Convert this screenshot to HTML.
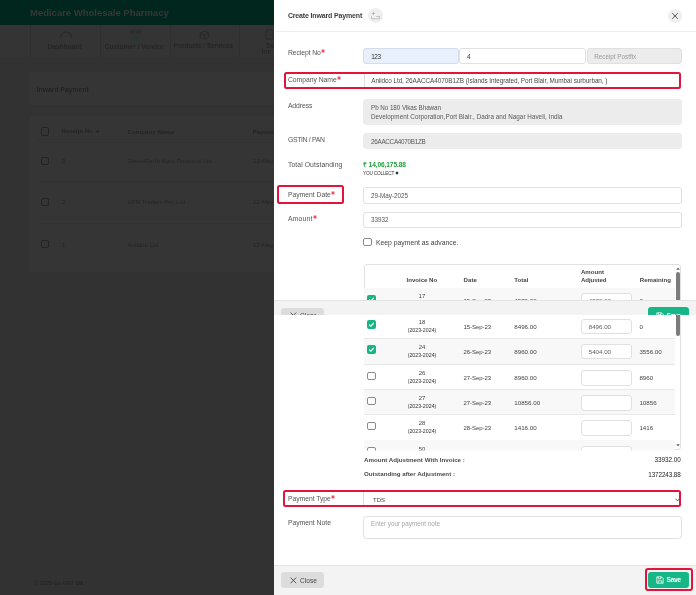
<!DOCTYPE html>
<html><head><meta charset="utf-8"><style>
html,body{margin:0;padding:0;}
body{width:696px;height:595px;overflow:hidden;position:relative;background:#323232;font-family:"Liberation Sans",sans-serif;}
#w{position:absolute;left:0;top:0;width:696px;height:595px;overflow:hidden;will-change:transform;background:#323232;}
.r{position:absolute;}
svg.r{overflow:visible;}
.t{position:absolute;white-space:nowrap;font-family:"Liberation Sans",sans-serif;}
</style></head><body><div id="w">
<div class="r" style="left:0px;top:0px;width:274.00px;height:25.00px;background:#00261d;"></div>
<div class="t" style="left:30.00px;top:8px;font-size:9.5px;line-height:9.5px;color:#3a3636;font-weight:700;letter-spacing:-0.006px;">Medicare Wholesale Pharmacy</div>
<div class="r" style="left:0px;top:25px;width:274.00px;height:32.00px;background:#343434;"></div>
<div class="r" style="left:30px;top:25px;width:0.80px;height:32.00px;background:#2f2f2f;"></div>
<div class="r" style="left:99.5px;top:25px;width:0.80px;height:32.00px;background:#2f2f2f;"></div>
<div class="r" style="left:169.5px;top:25px;width:0.80px;height:32.00px;background:#2f2f2f;"></div>
<div class="r" style="left:238.5px;top:25px;width:0.80px;height:32.00px;background:#2f2f2f;"></div>
<div class="t" style="left:47.70px;top:44px;font-size:6.5px;line-height:6.5px;color:#262626;font-weight:700;letter-spacing:0.031px;">Dashboard</div>
<div class="t" style="left:104.80px;top:44px;font-size:6.5px;line-height:6.5px;color:#262626;font-weight:700;letter-spacing:0.076px;">Customer / Vendor</div>
<div class="t" style="left:173.60px;top:43px;font-size:6.5px;line-height:6.5px;color:#262626;font-weight:700;letter-spacing:-0.046px;">Products / Services</div>
<div class="t" style="left:266.00px;top:43px;font-size:6.5px;line-height:6.5px;color:#262626;font-weight:700;">Sa</div>
<div class="t" style="left:261.70px;top:49px;font-size:6.5px;line-height:6.5px;color:#262626;font-weight:700;">Inv</div>
<svg class="r" style="left:59px;top:30px" width="14" height="9" viewBox="0 0 14 9"><path d="M1.5 7.5A5.3 5.3 0 0 1 12.5 7.5" fill="none" stroke="#262626" stroke-width="1.1"/><path d="M7 7L9 4.5" stroke="#1d3a30" stroke-width="0.9"/></svg>
<svg class="r" style="left:129px;top:29px" width="13" height="12" viewBox="0 0 13 12"><circle cx="3.5" cy="3" r="1.8" fill="none" stroke="#262626" stroke-width="0.9"/><circle cx="9.5" cy="3" r="1.8" fill="none" stroke="#262626" stroke-width="0.9"/><circle cx="6.5" cy="8.5" r="1.8" fill="none" stroke="#1d3a30" stroke-width="0.9"/></svg>
<svg class="r" style="left:199px;top:30px" width="11" height="10" viewBox="0 0 11 10"><path d="M5.5 1L9.8 3.2V7.2L5.5 9.3L1.2 7.2V3.2Z M1.2 3.2L5.5 5.3L9.8 3.2 M5.5 5.3V9.3" fill="none" stroke="#262626" stroke-width="0.9"/></svg>
<svg class="r" style="left:265px;top:29px" width="9" height="11" viewBox="0 0 9 11"><rect x="1" y="1" width="7" height="9" rx="1" fill="none" stroke="#262626" stroke-width="0.9"/></svg>
<div class="r" style="left:29px;top:72px;width:245.00px;height:33.00px;background:#353535;border-radius:3px;"></div>
<div class="t" style="left:36.70px;top:87px;font-size:6.8px;line-height:6.8px;color:#242424;font-weight:700;letter-spacing:-0.011px;">Inward Payment</div>
<div class="r" style="left:29px;top:116px;width:245.00px;height:156.00px;background:#353535;border-radius:3px;"></div>
<div class="r" style="left:40.9px;top:127.4px;width:8.40px;height:8.30px;border:0.9px solid #242424;border-radius:2px;box-sizing:border-box;"></div>
<div class="t" style="left:61.60px;top:128px;font-size:6.0px;line-height:6.0px;color:#242424;font-weight:700;letter-spacing:-0.038px;">Receipt No</div>
<svg class="r" style="left:94.5px;top:129.5px" width="5" height="4" viewBox="0 0 5 4"><path d="M0.5 0.8H4.5L2.5 3.2Z" fill="#242424"/></svg>
<div class="t" style="left:127.60px;top:129px;font-size:6.0px;line-height:6.0px;color:#242424;font-weight:700;letter-spacing:0.123px;">Company Name</div>
<div class="t" style="left:252.70px;top:129px;font-size:6.0px;line-height:6.0px;color:#242424;font-weight:700;">Payment</div>
<div class="r" style="left:37px;top:139px;width:237.00px;height:1.00px;background:#313131;"></div>
<div class="r" style="left:41.2px;top:156.70000000000002px;width:8.30px;height:8.20px;border:0.9px solid #242424;border-radius:2px;box-sizing:border-box;"></div>
<div class="t" style="left:62.00px;top:158px;font-size:6.0px;line-height:6.0px;color:#262626;font-weight:400;">3</div>
<div class="t" style="left:127.40px;top:158px;font-size:6.2px;line-height:6.2px;color:#262626;font-weight:400;letter-spacing:0.053px;">GreenEarth Agro Products Ltd</div>
<div class="t" style="left:253.00px;top:158px;font-size:6.2px;line-height:6.2px;color:#262626;font-weight:400;">12-May</div>
<div class="r" style="left:37px;top:181.2px;width:237.00px;height:1.00px;background:#323232;"></div>
<div class="r" style="left:41.2px;top:198.3px;width:8.30px;height:8.20px;border:0.9px solid #242424;border-radius:2px;box-sizing:border-box;"></div>
<div class="t" style="left:62.00px;top:199px;font-size:6.0px;line-height:6.0px;color:#262626;font-weight:400;">2</div>
<div class="t" style="left:127.40px;top:199px;font-size:6.2px;line-height:6.2px;color:#262626;font-weight:400;letter-spacing:-0.033px;">APN Traders Pvt. Ltd.</div>
<div class="t" style="left:253.00px;top:199px;font-size:6.2px;line-height:6.2px;color:#262626;font-weight:400;">12-May</div>
<div class="r" style="left:37px;top:223.3px;width:237.00px;height:1.00px;background:#323232;"></div>
<div class="r" style="left:41.2px;top:239.70000000000002px;width:8.30px;height:8.20px;border:0.9px solid #242424;border-radius:2px;box-sizing:border-box;"></div>
<div class="t" style="left:62.00px;top:242px;font-size:6.0px;line-height:6.0px;color:#262626;font-weight:400;">1</div>
<div class="t" style="left:127.40px;top:242px;font-size:6.2px;line-height:6.2px;color:#262626;font-weight:400;letter-spacing:0.032px;">Aniidco Ltd</div>
<div class="t" style="left:253.00px;top:242px;font-size:6.2px;line-height:6.2px;color:#262626;font-weight:400;">12-May</div>
<div class="t" style="left:34.00px;top:581px;font-size:5.9px;line-height:5.9px;color:#222;font-weight:400;letter-spacing:-0.164px;">© 2025 Go GST Bill</div>
<div class="r" style="left:274px;top:0px;width:422.00px;height:595.00px;background:#fff;"></div>
<div class="t" style="left:287.90px;top:12px;font-size:7.0px;line-height:7.0px;color:#3d3d3d;font-weight:700;letter-spacing:-0.151px;">Create Inward Payment</div>
<div class="r" style="left:368px;top:8px;width:14.70px;height:14.70px;background:#efefef;border-radius:50%;"></div>
<svg class="r" style="left:370px;top:10px" width="11" height="11" viewBox="0 0 11 11"><path d="M3.4 1.8v3.4M1.7 3.5h3.4" fill="none" stroke="#aaa" stroke-width="0.7"/><path d="M1.6 6.2v2.6h8v-2.3h-3.2" fill="none" stroke="#aaa" stroke-width="0.7"/></svg>
<div class="r" style="left:668px;top:8.6px;width:14.00px;height:14.00px;background:#efefef;border-radius:50%;"></div>
<svg class="r" style="left:671px;top:11.6px" width="8" height="8" viewBox="0 0 8 8"><path d="M1.2 1.2L6.8 6.8M6.8 1.2L1.2 6.8" stroke="#4a4a4a" stroke-width="0.9"/></svg>
<div class="r" style="left:275px;top:31px;width:421.00px;height:1.00px;background:#efefef;"></div>
<div class="t" style="left:287.90px;top:50px;font-size:6.8px;line-height:6.8px;color:#555;font-weight:400;letter-spacing:-0.071px;">Reciept No</div>
<svg class="r" style="left:321.2px;top:49.0px" width="4" height="4" viewBox="0 0 4 4"><path d="M2 0.2V3.8M0.4 1.1L3.6 2.9M3.6 1.1L0.4 2.9" stroke="#ea3b4a" stroke-width="0.95"/></svg>
<div class="r" style="left:363px;top:48.3px;width:95.50px;height:15.40px;background:#e8f0fe;border:0.8px solid #d6dde8;border-radius:3px;box-sizing:border-box;"></div>
<div class="t" style="left:371.20px;top:54px;font-size:6.4px;line-height:6.4px;color:#333;font-weight:400;letter-spacing:-0.439px;">123</div>
<div class="r" style="left:459px;top:48.3px;width:127.00px;height:15.40px;background:#fff;border:0.8px solid #e0e0e0;border-radius:3px;box-sizing:border-box;"></div>
<div class="t" style="left:466.90px;top:54px;font-size:6.4px;line-height:6.4px;color:#333;font-weight:400;">4</div>
<div class="r" style="left:586.7px;top:48.3px;width:95.00px;height:15.40px;background:#ececec;border:0.8px solid #e0e0e0;border-radius:3px;box-sizing:border-box;"></div>
<div class="t" style="left:594.20px;top:54px;font-size:6.3px;line-height:6.3px;color:#9a9a9a;font-weight:400;">Receipt Postfix</div>
<div class="r" style="left:363.6px;top:73px;width:317.40px;height:14.00px;background:#fff;border-left:0.8px solid #dcdcdc;"></div>
<div class="t" style="left:371.20px;top:78px;font-size:6.4px;line-height:6.4px;color:#4a4a4a;font-weight:400;letter-spacing:-0.062px;">Aniidco Ltd, 26AACCA4070B1ZB (Islands Integrated, Port Blair, Mumbai surburban, )</div>
<div class="t" style="left:287.90px;top:77px;font-size:6.8px;line-height:6.8px;color:#555;font-weight:400;letter-spacing:-0.030px;">Company Name</div>
<svg class="r" style="left:337.0px;top:76.0px" width="4" height="4" viewBox="0 0 4 4"><path d="M2 0.2V3.8M0.4 1.1L3.6 2.9M3.6 1.1L0.4 2.9" stroke="#ea3b4a" stroke-width="0.95"/></svg>
<div class="t" style="left:287.90px;top:103px;font-size:6.8px;line-height:6.8px;color:#555;font-weight:400;letter-spacing:-0.074px;">Address</div>
<div class="r" style="left:363px;top:99.2px;width:318.70px;height:25.40px;background:#ececec;border-radius:3.5px;"></div>
<div class="t" style="left:371.00px;top:105px;font-size:6.3px;line-height:6.3px;color:#595959;font-weight:400;letter-spacing:-0.059px;">Pb No 180 Vikas Bhawan</div>
<div class="t" style="left:371.00px;top:114px;font-size:6.3px;line-height:6.3px;color:#595959;font-weight:400;letter-spacing:0.037px;">Development Corporation,Port Blair., Dadra and Nagar Haveli, India</div>
<div class="t" style="left:287.90px;top:137px;font-size:6.8px;line-height:6.8px;color:#555;font-weight:400;letter-spacing:-0.292px;">GSTIN / PAN</div>
<div class="r" style="left:363px;top:133px;width:318.70px;height:15.60px;background:#ececec;border-radius:3.5px;"></div>
<div class="t" style="left:371.00px;top:139px;font-size:6.3px;line-height:6.3px;color:#595959;font-weight:400;letter-spacing:-0.270px;">26AACCA4070B1ZB</div>
<div class="t" style="left:287.90px;top:162px;font-size:6.8px;line-height:6.8px;color:#555;font-weight:400;letter-spacing:0.099px;">Total Outstanding</div>
<div class="t" style="left:363.00px;top:162px;font-size:6.6px;line-height:6.6px;color:#21a03a;font-weight:700;letter-spacing:-0.109px;">₹ 14,06,175.88</div>
<div class="t" style="left:363.00px;top:172px;font-size:4.7px;line-height:4.7px;color:#333;font-weight:400;letter-spacing:-0.167px;">YOU COLLECT</div>
<svg class="r" style="left:395.2px;top:171.3px" width="4" height="4" viewBox="0 0 4 4"><path d="M2 0.3L3.7 2L2 3.7L0.3 2Z" fill="#333"/></svg>
<div class="t" style="left:287.90px;top:192px;font-size:6.8px;line-height:6.8px;color:#555;font-weight:400;letter-spacing:-0.008px;">Payment Date</div>
<svg class="r" style="left:331.2px;top:191.0px" width="4" height="4" viewBox="0 0 4 4"><path d="M2 0.2V3.8M0.4 1.1L3.6 2.9M3.6 1.1L0.4 2.9" stroke="#ea3b4a" stroke-width="0.95"/></svg>
<div class="r" style="left:363px;top:187.4px;width:318.70px;height:16.60px;background:#fff;border:0.8px solid #e0e0e0;border-radius:3px;box-sizing:border-box;"></div>
<div class="t" style="left:371.00px;top:193px;font-size:6.3px;line-height:6.3px;color:#555;font-weight:400;">29-May-2025</div>
<div class="t" style="left:287.90px;top:216px;font-size:6.8px;line-height:6.8px;color:#555;font-weight:400;letter-spacing:0.193px;">Amount</div>
<svg class="r" style="left:312.6px;top:215.0px" width="4" height="4" viewBox="0 0 4 4"><path d="M2 0.2V3.8M0.4 1.1L3.6 2.9M3.6 1.1L0.4 2.9" stroke="#ea3b4a" stroke-width="0.95"/></svg>
<div class="r" style="left:363px;top:212.2px;width:318.70px;height:15.80px;background:#fff;border:0.8px solid #e0e0e0;border-radius:3px;box-sizing:border-box;"></div>
<div class="t" style="left:371.00px;top:217px;font-size:6.3px;line-height:6.3px;color:#555;font-weight:400;">33932</div>
<div class="r" style="left:363px;top:237.7px;width:9.00px;height:8.80px;background:#fff;border:0.9px solid #8a8a8a;border-radius:2px;box-sizing:border-box;"></div>
<div class="t" style="left:376.00px;top:240px;font-size:6.8px;line-height:6.8px;color:#444;font-weight:400;">Keep payment as advance.</div>
<div class="r" style="left:0;top:0;width:696px;height:595px;clip-path:inset(263.6px 14.7px 144.6px 363.5px round 3px);">
<div class="r" style="left:363.5px;top:263.6px;width:317.80px;height:186.80px;background:#fff;border:0.8px solid #e0e0e0;border-radius:3px;box-sizing:border-box;"></div>
<div class="t" style="left:406.60px;top:277px;font-size:6.1px;line-height:6.1px;color:#444;font-weight:700;letter-spacing:-0.027px;">Invoice No</div>
<div class="t" style="left:463.40px;top:277px;font-size:6.1px;line-height:6.1px;color:#444;font-weight:700;letter-spacing:0.126px;">Date</div>
<div class="t" style="left:514.30px;top:277px;font-size:6.1px;line-height:6.1px;color:#444;font-weight:700;letter-spacing:-0.005px;">Total</div>
<div class="t" style="left:580.90px;top:269px;font-size:6.1px;line-height:6.1px;color:#444;font-weight:700;letter-spacing:0.032px;">Amount</div>
<div class="t" style="left:580.90px;top:277px;font-size:6.1px;line-height:6.1px;color:#444;font-weight:700;letter-spacing:-0.056px;">Adjusted</div>
<div class="t" style="left:639.80px;top:277px;font-size:6.1px;line-height:6.1px;color:#444;font-weight:700;letter-spacing:-0.010px;">Remaining</div>
<div class="r" style="left:364.3px;top:287.6px;width:311.20px;height:0.80px;background:#e4e4e4;"></div>
<div class="r" style="left:364.3px;top:287.9px;width:311.20px;height:24.70px;background:#f8f8f8;"></div>
<div class="r" style="left:364.3px;top:312.6px;width:311.20px;height:0.80px;background:#e8e8e8;"></div>
<div class="r" style="left:367.3px;top:294.8px;width:8.70px;height:8.70px;background:#17b584;border-radius:2px;"></div>
<svg class="r" style="left:367.3px;top:294.8px" width="9" height="9" viewBox="0 0 9 9"><path d="M2.2 4.6L3.8 6.1L6.8 3" fill="none" stroke="#fff" stroke-width="1.2"/></svg>
<div class="t" style="left:422.00px;transform:translateX(-50%);top:294px;font-size:5.9px;line-height:5.9px;color:#444;font-weight:400;">17</div>
<div class="t" style="left:422.00px;transform:translateX(-50%);top:302px;font-size:5.25px;line-height:5.25px;color:#333;font-weight:400;">(2023-2024)</div>
<div class="t" style="left:463.40px;top:298px;font-size:6.0px;line-height:6.0px;color:#444;font-weight:400;letter-spacing:-0.040px;">15-Sep-23</div>
<div class="t" style="left:514.30px;top:298px;font-size:6.2px;line-height:6.2px;color:#444;font-weight:400;">4576.00</div>
<div class="r" style="left:580.8px;top:293.0px;width:51.00px;height:15.80px;background:#fff;border:0.8px solid #e0e0e0;border-radius:3px;box-sizing:border-box;"></div>
<div class="t" style="left:588.70px;top:298px;font-size:6.2px;line-height:6.2px;color:#606060;font-weight:400;">4576.00</div>
<div class="t" style="left:639.40px;top:298px;font-size:6.2px;line-height:6.2px;color:#444;font-weight:400;">0</div>
<div class="r" style="left:364.3px;top:313.4px;width:311.20px;height:24.30px;background:#fff;"></div>
<div class="r" style="left:364.3px;top:337.70000000000005px;width:311.20px;height:0.80px;background:#e8e8e8;"></div>
<div class="r" style="left:367.3px;top:320.3px;width:8.70px;height:8.70px;background:#17b584;border-radius:2px;"></div>
<svg class="r" style="left:367.3px;top:320.3px" width="9" height="9" viewBox="0 0 9 9"><path d="M2.2 4.6L3.8 6.1L6.8 3" fill="none" stroke="#fff" stroke-width="1.2"/></svg>
<div class="t" style="left:422.00px;transform:translateX(-50%);top:320px;font-size:5.9px;line-height:5.9px;color:#444;font-weight:400;">18</div>
<div class="t" style="left:422.00px;transform:translateX(-50%);top:328px;font-size:5.25px;line-height:5.25px;color:#333;font-weight:400;">(2023-2024)</div>
<div class="t" style="left:463.40px;top:324px;font-size:6.0px;line-height:6.0px;color:#444;font-weight:400;letter-spacing:-0.040px;">15-Sep-23</div>
<div class="t" style="left:514.30px;top:324px;font-size:6.2px;line-height:6.2px;color:#444;font-weight:400;">8496.00</div>
<div class="r" style="left:580.8px;top:318.5px;width:51.00px;height:15.80px;background:#fff;border:0.8px solid #e0e0e0;border-radius:3px;box-sizing:border-box;"></div>
<div class="t" style="left:588.70px;top:324px;font-size:6.2px;line-height:6.2px;color:#606060;font-weight:400;">8496.00</div>
<div class="t" style="left:639.40px;top:324px;font-size:6.2px;line-height:6.2px;color:#444;font-weight:400;">0</div>
<div class="r" style="left:364.3px;top:338.5px;width:311.20px;height:25.40px;background:#f8f8f8;"></div>
<div class="r" style="left:364.3px;top:363.90000000000003px;width:311.20px;height:0.80px;background:#e8e8e8;"></div>
<div class="r" style="left:367.3px;top:345.40000000000003px;width:8.70px;height:8.70px;background:#17b584;border-radius:2px;"></div>
<svg class="r" style="left:367.3px;top:345.40000000000003px" width="9" height="9" viewBox="0 0 9 9"><path d="M2.2 4.6L3.8 6.1L6.8 3" fill="none" stroke="#fff" stroke-width="1.2"/></svg>
<div class="t" style="left:422.00px;transform:translateX(-50%);top:345px;font-size:5.9px;line-height:5.9px;color:#444;font-weight:400;">24</div>
<div class="t" style="left:422.00px;transform:translateX(-50%);top:353px;font-size:5.25px;line-height:5.25px;color:#333;font-weight:400;">(2023-2024)</div>
<div class="t" style="left:463.40px;top:349px;font-size:6.0px;line-height:6.0px;color:#444;font-weight:400;letter-spacing:-0.040px;">26-Sep-23</div>
<div class="t" style="left:514.30px;top:349px;font-size:6.2px;line-height:6.2px;color:#444;font-weight:400;">8960.00</div>
<div class="r" style="left:580.8px;top:343.6px;width:51.00px;height:15.80px;background:#fff;border:0.8px solid #e0e0e0;border-radius:3px;box-sizing:border-box;"></div>
<div class="t" style="left:588.70px;top:349px;font-size:6.2px;line-height:6.2px;color:#606060;font-weight:400;">5404.00</div>
<div class="t" style="left:639.40px;top:349px;font-size:6.2px;line-height:6.2px;color:#444;font-weight:400;">3556.00</div>
<div class="r" style="left:364.3px;top:364.7px;width:311.20px;height:24.30px;background:#fff;"></div>
<div class="r" style="left:364.3px;top:389.0px;width:311.20px;height:0.80px;background:#e8e8e8;"></div>
<div class="r" style="left:367.3px;top:371.6px;width:8.70px;height:8.70px;background:#fff;border:0.9px solid #8a8a8a;border-radius:2px;box-sizing:border-box;"></div>
<div class="t" style="left:422.00px;transform:translateX(-50%);top:371px;font-size:5.9px;line-height:5.9px;color:#444;font-weight:400;">26</div>
<div class="t" style="left:422.00px;transform:translateX(-50%);top:379px;font-size:5.25px;line-height:5.25px;color:#333;font-weight:400;">(2023-2024)</div>
<div class="t" style="left:463.40px;top:375px;font-size:6.0px;line-height:6.0px;color:#444;font-weight:400;letter-spacing:-0.040px;">27-Sep-23</div>
<div class="t" style="left:514.30px;top:375px;font-size:6.2px;line-height:6.2px;color:#444;font-weight:400;">8960.00</div>
<div class="r" style="left:580.8px;top:369.8px;width:51.00px;height:15.80px;background:#fff;border:0.8px solid #e0e0e0;border-radius:3px;box-sizing:border-box;"></div>
<div class="t" style="left:588.70px;top:375px;font-size:6.2px;line-height:6.2px;color:#606060;font-weight:400;"></div>
<div class="t" style="left:639.40px;top:375px;font-size:6.2px;line-height:6.2px;color:#444;font-weight:400;">8960</div>
<div class="r" style="left:364.3px;top:389.79999999999995px;width:311.20px;height:24.10px;background:#f8f8f8;"></div>
<div class="r" style="left:364.3px;top:413.90000000000003px;width:311.20px;height:0.80px;background:#e8e8e8;"></div>
<div class="r" style="left:367.3px;top:396.7px;width:8.70px;height:8.70px;background:#fff;border:0.9px solid #8a8a8a;border-radius:2px;box-sizing:border-box;"></div>
<div class="t" style="left:422.00px;transform:translateX(-50%);top:396px;font-size:5.9px;line-height:5.9px;color:#444;font-weight:400;">27</div>
<div class="t" style="left:422.00px;transform:translateX(-50%);top:404px;font-size:5.25px;line-height:5.25px;color:#333;font-weight:400;">(2023-2024)</div>
<div class="t" style="left:463.40px;top:400px;font-size:6.0px;line-height:6.0px;color:#444;font-weight:400;letter-spacing:-0.040px;">27-Sep-23</div>
<div class="t" style="left:514.30px;top:400px;font-size:6.2px;line-height:6.2px;color:#444;font-weight:400;">10856.00</div>
<div class="r" style="left:580.8px;top:394.9px;width:51.00px;height:15.80px;background:#fff;border:0.8px solid #e0e0e0;border-radius:3px;box-sizing:border-box;"></div>
<div class="t" style="left:588.70px;top:400px;font-size:6.2px;line-height:6.2px;color:#606060;font-weight:400;"></div>
<div class="t" style="left:639.40px;top:400px;font-size:6.2px;line-height:6.2px;color:#444;font-weight:400;">10856</div>
<div class="r" style="left:364.3px;top:414.7px;width:311.20px;height:24.90px;background:#fff;"></div>
<div class="r" style="left:364.3px;top:439.6px;width:311.20px;height:0.80px;background:#e8e8e8;"></div>
<div class="r" style="left:367.3px;top:421.6px;width:8.70px;height:8.70px;background:#fff;border:0.9px solid #8a8a8a;border-radius:2px;box-sizing:border-box;"></div>
<div class="t" style="left:422.00px;transform:translateX(-50%);top:421px;font-size:5.9px;line-height:5.9px;color:#444;font-weight:400;">28</div>
<div class="t" style="left:422.00px;transform:translateX(-50%);top:429px;font-size:5.25px;line-height:5.25px;color:#333;font-weight:400;">(2023-2024)</div>
<div class="t" style="left:463.40px;top:425px;font-size:6.0px;line-height:6.0px;color:#444;font-weight:400;letter-spacing:-0.040px;">28-Sep-23</div>
<div class="t" style="left:514.30px;top:425px;font-size:6.2px;line-height:6.2px;color:#444;font-weight:400;">1416.00</div>
<div class="r" style="left:580.8px;top:419.8px;width:51.00px;height:15.80px;background:#fff;border:0.8px solid #e0e0e0;border-radius:3px;box-sizing:border-box;"></div>
<div class="t" style="left:588.70px;top:425px;font-size:6.2px;line-height:6.2px;color:#606060;font-weight:400;"></div>
<div class="t" style="left:639.40px;top:425px;font-size:6.2px;line-height:6.2px;color:#444;font-weight:400;">1416</div>
<div class="r" style="left:364.3px;top:440.4px;width:311.20px;height:25.20px;background:#f8f8f8;"></div>
<div class="r" style="left:367.3px;top:447.3px;width:8.70px;height:8.70px;background:#fff;border:0.9px solid #8a8a8a;border-radius:2px;box-sizing:border-box;"></div>
<div class="t" style="left:422.00px;transform:translateX(-50%);top:447px;font-size:5.9px;line-height:5.9px;color:#444;font-weight:400;">50</div>
<div class="t" style="left:422.00px;transform:translateX(-50%);top:455px;font-size:5.25px;line-height:5.25px;color:#333;font-weight:400;">(2023-2024)</div>
<div class="t" style="left:463.40px;top:451px;font-size:6.0px;line-height:6.0px;color:#444;font-weight:400;letter-spacing:-0.040px;">29-Sep-23</div>
<div class="t" style="left:514.30px;top:451px;font-size:6.2px;line-height:6.2px;color:#444;font-weight:400;">1416.00</div>
<div class="r" style="left:580.8px;top:445.5px;width:51.00px;height:15.80px;background:#fff;border:0.8px solid #e0e0e0;border-radius:3px;box-sizing:border-box;"></div>
<div class="t" style="left:588.70px;top:451px;font-size:6.2px;line-height:6.2px;color:#606060;font-weight:400;"></div>
<div class="t" style="left:639.40px;top:451px;font-size:6.2px;line-height:6.2px;color:#444;font-weight:400;">1416</div>
<svg class="r" style="left:675.9px;top:266.8px" width="4" height="3" viewBox="0 0 4 3"><path d="M0.2 2.8L2 0.5L3.8 2.8Z" fill="#666"/></svg>
<div class="r" style="left:676.1px;top:272.2px;width:3.60px;height:63.80px;background:#7c7c7c;border-radius:2px;"></div>
<svg class="r" style="left:675.9px;top:444.3px" width="4" height="3" viewBox="0 0 4 3"><path d="M0.2 0.2L2 2.5L3.8 0.2Z" fill="#666"/></svg>
</div>
<div class="r" style="left:274px;top:300.2px;width:422px;height:14.6px;overflow:hidden;background:#f3f3f3;"><div class="r" style="left:0px;top:0px;width:422.00px;height:0.90px;background:#e4e4e4;"></div>
<div class="r" style="left:6.9px;top:7.6px;width:43.40px;height:16.00px;background:#dcdcdc;border-radius:3px;"></div>
<svg class="r" style="left:16px;top:12.3px" width="7" height="7" viewBox="0 0 7 7"><path d="M0.6 0.6L6.2 6.2M6.2 0.6L0.6 6.2" stroke="#444" stroke-width="0.9"/></svg>
<div class="t" style="left:26.10px;top:13px;font-size:6.5px;line-height:6.5px;color:#444;font-weight:400;letter-spacing:0.020px;">Close</div>
<div class="r" style="left:373.7px;top:7.2px;width:41.00px;height:16.00px;background:#17b686;border-radius:3px;"></div>
<svg class="r" style="left:382.3px;top:11.5px" width="8" height="8" viewBox="0 0 8 8"><path d="M0.8 0.8h4.8l1.6 1.6v4.8h-6.4z M2.2 0.8v1.9h2.9v-1.9" fill="none" stroke="#fff" stroke-width="0.75"/></svg>
<div class="t" style="left:392.60px;top:13px;font-size:6.8px;line-height:6.8px;color:#fff;font-weight:700;letter-spacing:-0.494px;">Save</div>
</div>
<div class="t" style="left:364.00px;top:457px;font-size:6.2px;line-height:6.2px;color:#4a4a4a;font-weight:700;letter-spacing:0.001px;">Amount Adjustment With Invoice :</div>
<div class="t" style="right:15.30px;top:457px;font-size:6.3px;line-height:6.3px;color:#222;font-weight:400;">33932.00</div>
<div class="t" style="left:364.00px;top:471px;font-size:6.2px;line-height:6.2px;color:#4a4a4a;font-weight:700;letter-spacing:0.005px;">Outstanding after Adjustment :</div>
<div class="t" style="right:15.40px;top:472px;font-size:6.3px;line-height:6.3px;color:#222;font-weight:400;letter-spacing:-0.098px;">1372243.88</div>
<div class="r" style="left:363.4px;top:492px;width:317.60px;height:13.00px;background:#fff;border-left:0.8px solid #dcdcdc;"></div>
<div class="t" style="left:373.00px;top:497px;font-size:6.0px;line-height:6.0px;color:#444;font-weight:400;">TDS</div>
<svg class="r" style="left:674.8px;top:497.6px" width="5" height="4" viewBox="0 0 5 4"><path d="M0.6 0.8L2.5 2.8L4.4 0.8" fill="none" stroke="#444" stroke-width="0.9"/></svg>
<div class="t" style="left:287.90px;top:496px;font-size:6.8px;line-height:6.8px;color:#555;font-weight:400;letter-spacing:-0.031px;">Payment Type</div>
<svg class="r" style="left:331.2px;top:495.0px" width="4" height="4" viewBox="0 0 4 4"><path d="M2 0.2V3.8M0.4 1.1L3.6 2.9M3.6 1.1L0.4 2.9" stroke="#ea3b4a" stroke-width="0.95"/></svg>
<div class="t" style="left:287.90px;top:520px;font-size:6.8px;line-height:6.8px;color:#555;font-weight:400;letter-spacing:0.001px;">Payment Note</div>
<div class="r" style="left:363.4px;top:516.3px;width:318.30px;height:22.90px;background:#fff;border:0.8px solid #e0e0e0;border-radius:3.5px;box-sizing:border-box;"></div>
<div class="t" style="left:371.00px;top:521px;font-size:6.3px;line-height:6.3px;color:#a6a6a6;font-weight:400;">Enter your payment note</div>
<div class="r" style="left:274px;top:564.8px;width:422.00px;height:30.20px;background:#f3f3f3;"></div>
<div class="r" style="left:274px;top:564.8px;width:422.00px;height:0.90px;background:#e4e4e4;"></div>
<div class="r" style="left:280.9px;top:572px;width:43.40px;height:16.00px;background:#dcdcdc;border-radius:3px;"></div>
<svg class="r" style="left:290px;top:577px" width="7" height="7" viewBox="0 0 7 7"><path d="M0.6 0.6L6.2 6.2M6.2 0.6L0.6 6.2" stroke="#444" stroke-width="0.9"/></svg>
<div class="t" style="left:300.10px;top:578px;font-size:6.5px;line-height:6.5px;color:#444;font-weight:400;letter-spacing:0.020px;">Close</div>
<div class="r" style="left:647.8px;top:571.9px;width:41.20px;height:16.10px;background:#17b686;border-radius:3px;"></div>
<svg class="r" style="left:656.3px;top:576.4px" width="8" height="8" viewBox="0 0 8 8"><path d="M0.8 0.8h4.8l1.6 1.6v4.8h-6.4z M2.2 0.8v1.9h2.9v-1.9 M2.2 7.2v-2.4h3.6v2.4" fill="none" stroke="#fff" stroke-width="0.75"/></svg>
<div class="t" style="left:666.60px;top:577px;font-size:6.8px;line-height:6.8px;color:#fff;font-weight:700;letter-spacing:-0.494px;">Save</div>
<div class="r" style="left:284.4px;top:71.7px;width:396.60px;height:17.60px;border:2px solid #e3143c;border-radius:2.5px;box-sizing:border-box;"></div>
<div class="r" style="left:277.1px;top:185.2px;width:66.70px;height:18.70px;border:2px solid #e3143c;border-radius:2.5px;box-sizing:border-box;"></div>
<div class="r" style="left:283px;top:490px;width:398.00px;height:16.80px;border:2px solid #e3143c;border-radius:2.5px;box-sizing:border-box;"></div>
<div class="r" style="left:645px;top:568.2px;width:47.90px;height:22.80px;border:2px solid #e3143c;border-radius:3px;box-sizing:border-box;"></div>
</div></body></html>
